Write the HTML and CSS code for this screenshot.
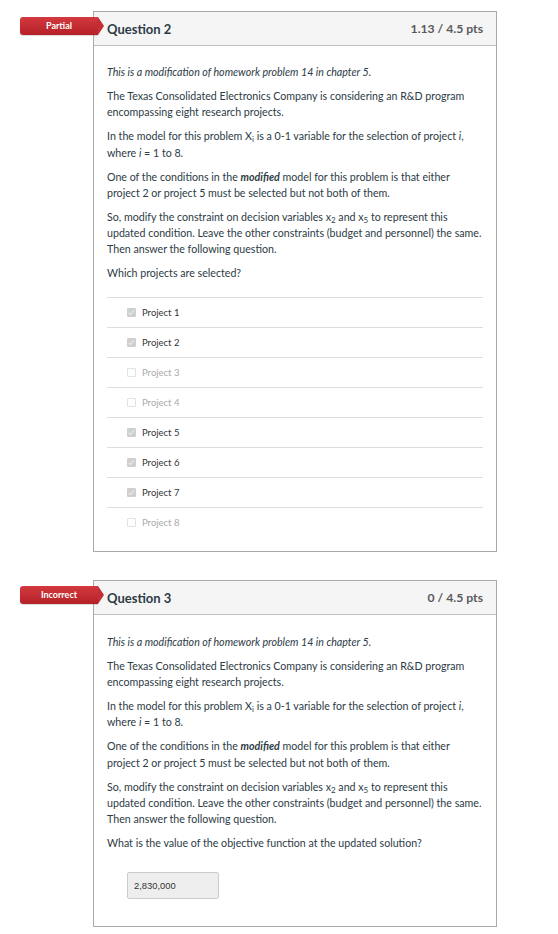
FILE: index.html
```html
<!DOCTYPE html>
<html lang="en">
<head>
<meta charset="utf-8">
<title>Quiz results</title>
<link rel="stylesheet" href="styles.css">
</head>
<body>
<div class="page">
  <div class="question">
    <div class="badge">Partial</div>
    <div class="card">
      <div class="card-header">
        <span class="q-title">Question 2</span>
        <span class="q-points">1.13 / 4.5 pts</span>
      </div>
      <div class="card-body">
        <div class="q-text">
          <p><em>This is a modification of homework problem 14 in chapter 5.</em></p>
          <p>The Texas Consolidated Electronics Company is considering an R&amp;D program encompassing eight research projects.</p>
          <p>In the model for this problem X<sub>i</sub> is a 0-1 variable for the selection of project <em>i</em>, where <em>i</em> = 1 to 8.</p>
          <p>One of the conditions in the <strong><em>modified</em></strong> model for this problem is that either project 2 or project 5 must be selected but not both of them.</p>
          <p>So, modify the constraint on decision variables x<sub>2</sub> and x<sub>5</sub> to represent this updated condition. Leave the other constraints (budget and personnel) the same. Then answer the following question.</p>
          <p>Which projects are selected?</p>
        </div>
        <div class="answers">
          <div class="answer checked"><span class="box"></span><span class="label">Project 1</span></div>
          <div class="answer checked"><span class="box"></span><span class="label">Project 2</span></div>
          <div class="answer"><span class="box"></span><span class="label">Project 3</span></div>
          <div class="answer"><span class="box"></span><span class="label">Project 4</span></div>
          <div class="answer checked"><span class="box"></span><span class="label">Project 5</span></div>
          <div class="answer checked"><span class="box"></span><span class="label">Project 6</span></div>
          <div class="answer checked"><span class="box"></span><span class="label">Project 7</span></div>
          <div class="answer"><span class="box"></span><span class="label">Project 8</span></div>
        </div>
      </div>
    </div>
  </div>

  <div class="question">
    <div class="badge">Incorrect</div>
    <div class="card">
      <div class="card-header">
        <span class="q-title">Question 3</span>
        <span class="q-points">0 / 4.5 pts</span>
      </div>
      <div class="card-body body-input">
        <div class="q-text">
          <p><em>This is a modification of homework problem 14 in chapter 5.</em></p>
          <p>The Texas Consolidated Electronics Company is considering an R&amp;D program encompassing eight research projects.</p>
          <p>In the model for this problem X<sub>i</sub> is a 0-1 variable for the selection of project <em>i</em>, where <em>i</em> = 1 to 8.</p>
          <p>One of the conditions in the <strong><em>modified</em></strong> model for this problem is that either project 2 or project 5 must be selected but not both of them.</p>
          <p>So, modify the constraint on decision variables x<sub>2</sub> and x<sub>5</sub> to represent this updated condition. Leave the other constraints (budget and personnel) the same. Then answer the following question.</p>
          <p>What is the value of the objective function at the updated solution?</p>
        </div>
        <div class="input-wrap">
          <div class="answer-input">2,830,000</div>
        </div>
      </div>
    </div>
  </div>
</div>
</body>
</html>
```

FILE: styles.css
```css
html, body {
  margin: 0;
  padding: 0;
  background: #ffffff;
}

.page {
  display: flex;
  flex-direction: column;
  gap: 28px;
  padding-top: 11px;
  font-family: Lato, "Open Sans", sans-serif;
  color: #2d3b45;
}

.question {
  position: relative;
  padding-left: 93px;
}

.badge {
  position: absolute;
  left: 20px;
  top: 6px;
  width: 78px;
  height: 18px;
  line-height: 18px;
  text-align: center;
  color: #ffffff;
  font-size: 9px;
  font-weight: 700;
  background: linear-gradient(#d3393e, #b42127);
  border-radius: 3px 0 0 3px;
  box-shadow: 0 1px 1px rgba(0,0,0,0.15);
}

.badge::after {
  content: "";
  position: absolute;
  right: -6px;
  top: 0;
  width: 0;
  height: 0;
  border-top: 9px solid transparent;
  border-bottom: 9px solid transparent;
  border-left: 6px solid #c42d32;
}

.card {
  width: 402px;
  border: 1px solid #aaaaaa;
  background: #ffffff;
}

.card-header {
  display: flex;
  justify-content: space-between;
  align-items: center;
  height: 33px;
  padding: 0 13px 0 13px;
  background: #f5f5f5;
  border-bottom: 1px solid #c0c0c0;
}

.q-title {
  font-size: 13px;
  font-weight: 700;
  color: #2d3b45;
  padding-top: 1px;
}

.q-points {
  font-size: 12.2px;
  font-weight: 700;
  color: #5a5a5a;
}

.card-body {
  padding: 18px 13px 14px 13px;
}

.body-input {
  padding-top: 19px;
  padding-bottom: 27px;
}

.q-text {
  font-size: 10.65px;
  line-height: 16.3px;
}

.q-text p {
  margin: 0 0 7.7px 0;
}

.q-text sub {
  font-size: 0.75em;
  line-height: 1;
  vertical-align: -0.25em;
}

.answers {
  margin-top: 15px;
  display: flex;
  flex-direction: column;
}

.answer {
  display: flex;
  align-items: center;
  gap: 6px;
  height: 30px;
  border-top: 1px solid #dddddd;
  padding-left: 20px;
  box-sizing: border-box;
  font-size: 9.5px;
  color: #aaaaaa;
}

.answer.checked {
  color: #333333;
}

.box {
  width: 9px;
  height: 9px;
  box-sizing: border-box;
  border: 1px solid #e2e2e2;
  border-radius: 1px;
  background: #ffffff;
  position: relative;
}

.answer.checked .box {
  background: #cfcfcf;
  border-color: #cfcfcf;
}

.answer.checked .box::after {
  content: "";
  position: absolute;
  left: 2.3px;
  top: 0.5px;
  width: 2px;
  height: 4.5px;
  border-right: 1.2px solid #ececec;
  border-bottom: 1.2px solid #ececec;
  transform: rotate(40deg);
}

.input-wrap {
  padding-top: 13px;
  padding-left: 20px;
}

.answer-input {
  width: 92px;
  height: 27px;
  box-sizing: border-box;
  background: #eeeeee;
  border: 1px solid #cccccc;
  border-radius: 2px;
  padding-left: 6px;
  display: flex;
  align-items: center;
  font-family: "Liberation Sans", Arial, sans-serif;
  font-size: 9.4px;
  color: #333333;
}
```
